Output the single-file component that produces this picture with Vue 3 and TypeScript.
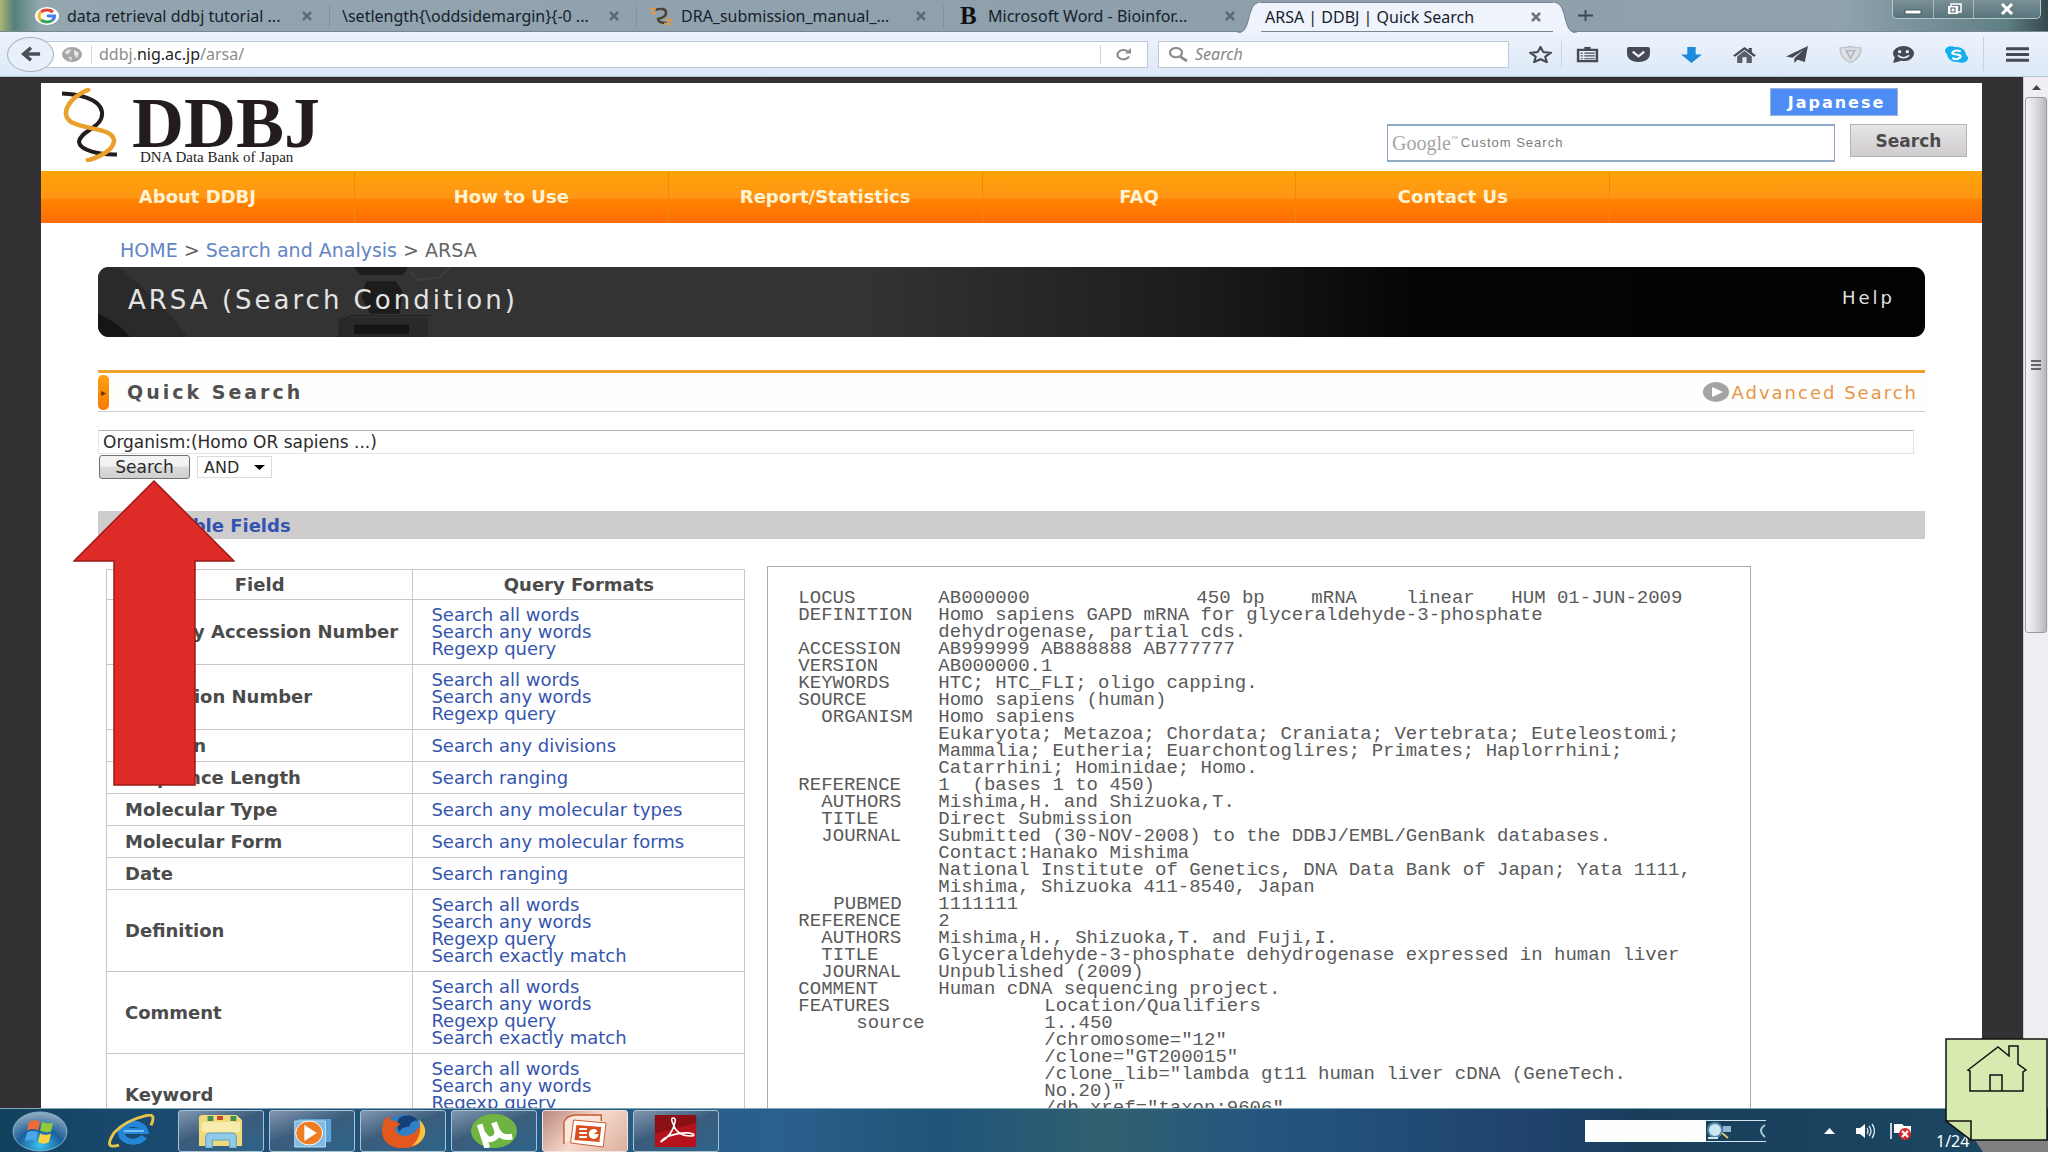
<script setup lang="ts">
import { ref } from 'vue'

interface Tab { title: string; icon: 'multi' | 'plain' | 'dna' | 'bold' }
interface FieldRow { name: string; formats: string[] }
interface RecordLine { label?: string; indent?: number; text: string; feature?: boolean; parts?: string[] }

const tabs: Tab[] = [
  { title: 'data retrieval ddbj tutorial ...', icon: 'multi' },
  { title: '\\setlength{\\oddsidemargin}{-0 ...', icon: 'plain' },
  { title: 'DRA_submission_manual_...', icon: 'dna' },
  { title: 'Microsoft Word - Bioinfor...', icon: 'bold' },
]

const navItems = ['About DDBJ', 'How to Use', 'Report/Statistics', 'FAQ', 'Contact Us']

const all = 'Search all words'
const any = 'Search any words'
const regexp = 'Regexp query'
const exact = 'Search exactly match'

const fields: FieldRow[] = [
  { name: 'Primary Accession Number', formats: [all, any, regexp] },
  { name: 'Accession Number', formats: [all, any, regexp] },
  { name: 'Division', formats: ['Search any divisions'] },
  { name: 'Sequence Length', formats: ['Search ranging'] },
  { name: 'Molecular Type', formats: ['Search any molecular types'] },
  { name: 'Molecular Form', formats: ['Search any molecular forms'] },
  { name: 'Date', formats: ['Search ranging'] },
  { name: 'Definition', formats: [all, any, regexp, exact] },
  { name: 'Comment', formats: [all, any, regexp, exact] },
  { name: 'Keyword', formats: [all, any, regexp, exact] },
]

const record: RecordLine[] = [
  { label: 'LOCUS', text: '', parts: ['AB000000', '450 bp', 'mRNA', 'linear', 'HUM 01-JUN-2009'] },
  { label: 'DEFINITION', text: 'Homo sapiens GAPD mRNA for glyceraldehyde-3-phosphate' },
  { text: 'dehydrogenase, partial cds.' },
  { label: 'ACCESSION', text: 'AB999999 AB888888 AB777777' },
  { label: 'VERSION', text: 'AB000000.1' },
  { label: 'KEYWORDS', text: 'HTC; HTC_FLI; oligo capping.' },
  { label: 'SOURCE', text: 'Homo sapiens (human)' },
  { label: 'ORGANISM', indent: 2, text: 'Homo sapiens' },
  { text: 'Eukaryota; Metazoa; Chordata; Craniata; Vertebrata; Euteleostomi;' },
  { text: 'Mammalia; Eutheria; Euarchontoglires; Primates; Haplorrhini;' },
  { text: 'Catarrhini; Hominidae; Homo.' },
  { label: 'REFERENCE', text: '1  (bases 1 to 450)' },
  { label: 'AUTHORS', indent: 2, text: 'Mishima,H. and Shizuoka,T.' },
  { label: 'TITLE', indent: 2, text: 'Direct Submission' },
  { label: 'JOURNAL', indent: 2, text: 'Submitted (30-NOV-2008) to the DDBJ/EMBL/GenBank databases.' },
  { text: 'Contact:Hanako Mishima' },
  { text: 'National Institute of Genetics, DNA Data Bank of Japan; Yata 1111,' },
  { text: 'Mishima, Shizuoka 411-8540, Japan' },
  { label: 'PUBMED', indent: 3, text: '1111111' },
  { label: 'REFERENCE', text: '2' },
  { label: 'AUTHORS', indent: 2, text: 'Mishima,H., Shizuoka,T. and Fuji,I.' },
  { label: 'TITLE', indent: 2, text: 'Glyceraldehyde-3-phosphate dehydrogenase expressed in human liver' },
  { label: 'JOURNAL', indent: 2, text: 'Unpublished (2009)' },
  { label: 'COMMENT', text: 'Human cDNA sequencing project.' },
  { label: 'FEATURES', text: 'Location/Qualifiers', feature: true },
  { label: 'source', indent: 5, text: '1..450', feature: true },
  { text: '/chromosome="12"', feature: true },
  { text: '/clone="GT200015"', feature: true },
  { text: '/clone_lib="lambda gt11 human liver cDNA (GeneTech.', feature: true },
  { text: 'No.20)"', feature: true },
  { text: '/db_xref="taxon:9606"', feature: true },
]

const query = ref('Organism:(Homo OR sapiens ...)')
const operator = ref('AND')
</script>

<template>
  <div class="desktop">
    <header class="tabstrip">
      <div v-for="tab in tabs" :key="tab.title" class="tab" :class="'tab-' + tab.icon">
        <svg v-if="tab.icon === 'multi'" class="fav" viewBox="0 0 24 18" preserveAspectRatio="none">
          <ellipse cx="12" cy="9" rx="12" ry="9" fill="#fff" />
          <g fill="none" stroke-width="3">
            <path d="M18 5A8 6 0 0 0 6 5" stroke="#e2453a" />
            <path d="M6 5A8 6 0 0 0 6 13" stroke="#f4b928" />
            <path d="M6 13A8 6 0 0 0 17 13.500" stroke="#35a155" />
            <path d="M12 9H19.500A8 6 0 0 1 17 13.500" stroke="#4380ea" />
          </g>
        </svg>
        <svg v-else-if="tab.icon === 'dna'" class="fav" viewBox="0 0 24 18" preserveAspectRatio="none">
          <path d="M6 3q10-3 11 2T9 12q0 4 9 4" fill="none" stroke="#4b4338" stroke-width="2.500" />
          <path d="M1 2h6M2 6h5M16 13h7M15 17h7" stroke="#d79a4b" stroke-width="2.500" />
        </svg>
        <span v-else-if="tab.icon === 'bold'" class="fav letter">B</span>
        <span class="tab-title">{{ tab.title }}</span>
        <button class="tab-close" aria-label="Close tab">
          <svg viewBox="0 0 12 10"><path d="M2 1l8 8M10 1l-8 8" stroke="#5d6b78" stroke-width="2.500" /></svg>
        </button>
      </div>
      <div class="tab active">
        <svg class="curve left" viewBox="0 0 24 30" preserveAspectRatio="none"><path d="M0 30C16 30 8 0 24 0V30z" fill="#eef3fc" /><path d="M0 30C16 30 8 0 24 0" fill="none" stroke="#74838f" /></svg>
        <span class="tab-title">ARSA | DDBJ | Quick Search</span>
        <button class="tab-close" aria-label="Close tab">
          <svg viewBox="0 0 12 10"><path d="M2 1l8 8M10 1l-8 8" stroke="#6c7179" stroke-width="2.500" /></svg>
        </button>
        <svg class="curve right" viewBox="0 0 24 30" preserveAspectRatio="none"><path d="M24 30C8 30 16 0 0 0V30z" fill="#eef3fc" /><path d="M24 30C8 30 16 0 0 0" fill="none" stroke="#74838f" /></svg>
      </div>
      <button class="new-tab" aria-label="New tab">
        <svg viewBox="0 0 16 12" preserveAspectRatio="none"><path d="M8 0v12M0 6h16" stroke="#3d4a55" stroke-width="2" /></svg>
      </button>
      <div class="window-buttons">
        <button aria-label="Minimize"><svg viewBox="0 0 18 12"><rect x="1" y="7" width="16" height="4" fill="#fff" stroke="#46585e" /></svg></button>
        <button aria-label="Restore"><svg viewBox="0 0 18 12"><rect x="6" y="1" width="10" height="8" fill="none" stroke="#fff" stroke-width="1.500" /><rect x="3" y="3" width="10" height="8" fill="#fff" /><rect x="6" y="5" width="4" height="4" fill="none" stroke="#46585e" /></svg></button>
        <button aria-label="Close"><svg viewBox="0 0 18 12"><path d="M4 1l10 10M14 1L4 11" stroke="#fff" stroke-width="3" /></svg></button>
      </div>
    </header>

    <div class="toolbar">
      <button class="back" aria-label="Back">
        <svg viewBox="0 0 22 18" preserveAspectRatio="none"><path d="M11 2L3 9l8 7M3 9h18" fill="none" stroke="#4a4f57" stroke-width="4" /></svg>
      </button>
      <div class="urlbar">
        <svg class="globe" viewBox="0 0 20 16" preserveAspectRatio="none"><ellipse cx="10" cy="8" rx="10" ry="8" fill="#a6a6a6" /><path d="M3 5q4-4 6-2l-2 4-3 1zM12 3l5 3-2 6-3-4zM6 10l4 1-1 4z" fill="#e4e4e4" /></svg>
        <div class="address"><span>ddbj.</span><b>nig.ac.jp</b><span>/arsa/</span></div>
        <button class="reload" aria-label="Reload">
          <svg viewBox="0 0 18 14" preserveAspectRatio="none"><path d="M14 9A6 5 0 1 1 13 4" fill="none" stroke="#8b8b8b" stroke-width="2.200" /><path d="M10 6h6V0z" fill="#8b8b8b" /></svg>
        </button>
      </div>
      <label class="searchbar">
        <svg viewBox="0 0 20 16" preserveAspectRatio="none"><ellipse cx="8" cy="6" rx="6" ry="5" fill="none" stroke="#8d8d8d" stroke-width="2.200" /><path d="M12 10l7 5" stroke="#8d8d8d" stroke-width="3" /></svg>
        <input type="text" placeholder="Search" aria-label="Search the web" />
      </label>
      <div class="tools">
        <button class="star" aria-label="Bookmark"><svg viewBox="0 0 24 18" preserveAspectRatio="none"><path d="M12 1l3 5.500 7.500.8-5.500 4 1.500 5.700L12 14l-6.500 3L7 11.300l-5.500-4L9 6.500z" fill="none" stroke="#454a55" stroke-width="2.200" /></svg></button>
        <button class="list" aria-label="Bookmarks list"><svg viewBox="0 0 22 18" preserveAspectRatio="none"><path d="M2 4h18v12H2z" fill="none" stroke="#454a55" stroke-width="2.400" /><path d="M8 1h6v3H8z" fill="#454a55" /><path d="M4.500 7.500h2M8 7.500h10M4.500 10.500h2M8 10.500h10M4.500 13.500h2M8 13.500h10" stroke="#454a55" stroke-width="1.300" /></svg></button>
        <button aria-label="Pocket"><svg viewBox="0 0 24 18" preserveAspectRatio="none"><path d="M2 1h20q2 0 2 2v4q0 10-12 10T0 7V3q0-2 2-2z" fill="#454a55" /><path d="M6 6l6 5 6-5" fill="none" stroke="#e8eff9" stroke-width="2.400" /></svg></button>
        <button aria-label="Downloads"><svg viewBox="0 0 22 18" preserveAspectRatio="none"><path d="M7 1h8v8h6L11 18 1 9h6z" fill="#1c8bd9" /></svg></button>
        <button aria-label="Home page"><svg viewBox="0 0 22 18" preserveAspectRatio="none"><path d="M11 1L0 10l2 1.500 9-7.500 9 7.500 2-1.500-4-3.300V2h-3v2.200z" fill="#454a55" /><path d="M4 11l7-6 7 6v7h-5v-6H9v6H4z" fill="#5a5f69" /></svg></button>
        <button aria-label="Send"><svg viewBox="0 0 22 18" preserveAspectRatio="none"><path d="M21 0L0 11l6 1.500L17 4 8 13v5l3-3.500 7 2.500z" fill="#454a55" /></svg></button>
        <button aria-label="Shield"><svg viewBox="0 0 22 18" preserveAspectRatio="none"><path d="M1 2q5 0 10-1.500Q16 2 21 2q0 11-10 15.500Q1 13 1 2z" fill="#dde1e6" stroke="#bfc3c9" stroke-width="1.500" /><path d="M7 5h8l-4 8z" fill="none" stroke="#b4b8be" stroke-width="1.800" /></svg></button>
        <button aria-label="Chat"><svg viewBox="0 0 24 18" preserveAspectRatio="none"><ellipse cx="12" cy="8" rx="11" ry="8" fill="#454a55" /><path d="M3 12l-2 6 8-2z" fill="#454a55" /><circle cx="8" cy="6" r="1.800" fill="#e8eff9" /><circle cx="16" cy="6" r="1.800" fill="#e8eff9" /><path d="M6 10q6 5 12 0" fill="none" stroke="#e8eff9" stroke-width="1.600" /></svg></button>
        <button aria-label="Skype"><svg viewBox="0 0 22 18" preserveAspectRatio="none"><ellipse cx="11" cy="9" rx="9" ry="8" fill="#14aef0" /><ellipse cx="6" cy="5" rx="6" ry="4.800" fill="#14aef0" /><ellipse cx="16" cy="13" rx="6" ry="4.800" fill="#14aef0" /><path d="M15 6q-4-2.500-7 0t3 3 3 3.500-7 0" fill="none" stroke="#fff" stroke-width="2.200" /></svg></button>
        <button class="menu" aria-label="Menu"><svg viewBox="0 0 24 18" preserveAspectRatio="none"><path d="M1 3h22M1 9h22M1 15h22" stroke="#454a55" stroke-width="3.200" stroke-linecap="round" /></svg></button>
      </div>
    </div>

    <div class="viewport">
      <main class="page">
        <div class="masthead">
          <a href="#" class="logo">
            <svg viewBox="0 0 56 74" preserveAspectRatio="none">
              <path d="M0 5.500C14 6 38 10 40 24 42 40 18 42 17 54 18 62 36 67 55 66.500" fill="none" stroke="#231c1c" stroke-width="4" />
              <path d="M28 1C10 8-4 24 9 34 24 42 52 40 52 53 51 64 34 70 24 73" fill="none" stroke="#e9a02d" stroke-width="4.500" />
            </svg>
            <span class="logo-text"><strong>DDBJ</strong><small>DNA Data Bank of Japan</small></span>
          </a>
          <div class="site-tools">
            <a href="#" class="language">Japanese</a>
            <form class="site-search" @submit.prevent>
              <label class="google-box">
                <span class="google">Google<sup>™</sup></span><span class="custom">Custom Search</span>
                <input type="text" aria-label="Google Custom Search" />
              </label>
              <button>Search</button>
            </form>
          </div>
        </div>

        <nav class="mainnav">
          <a v-for="item in navItems" :key="item" href="#">{{ item }}</a>
        </nav>

        <div class="content">
          <p class="crumbs"><a href="#">HOME</a> &gt; <a href="#">Search and Analysis</a> &gt; ARSA</p>
          <div class="banner">
            <svg class="banner-art" viewBox="0 0 500 69" preserveAspectRatio="none">
              <path d="M0 0h20q40 30 70 69H30Q10 50 0 46z" fill="#2a2a2a" />
              <path d="M0 46q20 8 32 23H0z" fill="#151515" />
              <path d="M255 0h55l-5 8h-42zM268 14h30l6 10-2 22h-30l-8-16z" fill="#1c1c1c" />
              <path d="M240 50h90v19h-90z" fill="#292929" /><path d="M256 57h55v9h-55z" fill="#151515" />
              <path d="M312 4l8 9 22-3 10-10" fill="none" stroke="#3e3e3e" stroke-width="2" />
              <path d="M243 69V54l10-6h80" fill="none" stroke="#202020" />
            </svg>
            <h1>ARSA (Search Condition)</h1>
            <a href="#">Help</a>
          </div>

          <div class="section-head">
            <i class="marker">▸</i>
            <h2>Quick Search</h2>
            <a href="#"><svg viewBox="0 0 26 20" preserveAspectRatio="none"><ellipse cx="13" cy="10" rx="13" ry="10" fill="#a4a4a4" /><path d="M9 5l11 5-11 5z" fill="#fff" /></svg>Advanced Search</a>
          </div>

          <form class="query" @submit.prevent>
            <input v-model="query" type="text" aria-label="Search condition" />
            <div class="query-actions">
              <button>Search</button>
              <span class="operator">
                <select v-model="operator" aria-label="Operator"><option>AND</option><option>OR</option></select>
                <svg viewBox="0 0 12 6" preserveAspectRatio="none"><path d="M0 0h12L6 6z" /></svg>
              </span>
            </div>
          </form>

          <h3 class="fields-title"><a href="#">Available Fields</a></h3>

          <div class="columns">
            <table class="fields">
              <thead><tr><th scope="col">Field</th><th scope="col">Query Formats</th></tr></thead>
              <tbody>
                <tr v-for="row in fields" :key="row.name">
                  <th scope="row">{{ row.name }}</th>
                  <td><a v-for="f in row.formats" :key="f" href="#">{{ f }}</a></td>
                </tr>
              </tbody>
            </table>
            <section class="record">
              <div v-for="(line, i) in record" :key="i" class="line" :class="{ feature: line.feature }">
                <span class="label" :class="'in' + (line.indent ?? 0)">{{ line.label }}</span>
                <span v-if="line.parts" class="locus"><span v-for="p in line.parts" :key="p">{{ p }}</span></span>
                <span v-else>{{ line.text }}</span>
              </div>
            </section>
          </div>
        </div>
      </main>
      <div class="scrollbar">
        <svg class="up" viewBox="0 0 10 5" preserveAspectRatio="none"><path d="M0 5l5-5 5 5z" fill="#444" /></svg>
        <div class="thumb"><i></i><i></i><i></i></div>
      </div>
    </div>

    <footer class="taskbar">
      <button class="orb" aria-label="Start">
        <svg viewBox="0 0 56 42" preserveAspectRatio="none">
          <defs><radialGradient id="orb" cx=".5" cy=".85" r=".8"><stop offset="0" stop-color="#39c4f2" /><stop offset=".5" stop-color="#1b5f9c" /><stop offset="1" stop-color="#8aa7bb" /></radialGradient></defs>
          <ellipse cx="28" cy="21" rx="27" ry="20" fill="url(#orb)" stroke="#7fb2cf" />
          <path d="M17 11q6-3 11 0l-2 9q-5-3-11 0z" fill="#ec6b36" /><path d="M30 11q6 3 11 1l-2 9q-5 2-11-1z" fill="#92c83e" />
          <path d="M15 22q6-3 11 0l-2 9q-5-3-11 0z" fill="#4aa8e8" /><path d="M28 23q6 3 11 0l-2 9q-5 3-11 0z" fill="#fbd043" />
        </svg>
      </button>
      <button class="ie" aria-label="Internet Explorer">
        <svg viewBox="0 0 48 36" preserveAspectRatio="none">
          <path d="M37 24A12 9.500 0 1 1 38 18H17" fill="none" stroke="#2386d8" stroke-width="6.500" />
          <path d="M17 18h20" stroke="#7cc6f5" stroke-width="2" />
          <path d="M44 12Q50-2 38 2 18 7 7 20-4 38 12 33" fill="none" stroke="#e8c54a" stroke-width="3" />
        </svg>
      </button>
      <button class="task" aria-label="Explorer">
        <svg viewBox="0 0 48 34" preserveAspectRatio="none"><path d="M1 4q0-3 4-3h35l6 5v26H1z" fill="#f0d97c" /><path d="M4 8h40v10H4z" fill="#f8ebae" /><path d="M10 2h6v5h-6zM34 2h6v5h-6z" fill="#3f8f52" /><path d="M20 2h6v4h-6z" fill="#c8442b" /><path d="M8 34V23q0-4 5-4h22q5 0 5 4v11h-7v-8H15v8z" fill="#8fcbe9" stroke="#5f9fc4" /></svg>
      </button>
      <button class="task" aria-label="Media Player">
        <svg viewBox="0 0 48 34" preserveAspectRatio="none"><path d="M10 5h34v23H10z" fill="#5ca2d4" /><path d="M6 7h32v26H6z" fill="#7dbbe6" stroke="#bfe0f5" /><ellipse cx="21" cy="19" rx="14" ry="12" fill="#ee7d25" stroke="#fff" /><path d="M16 11l13 8-13 8z" fill="#fff" /></svg>
      </button>
      <button class="task" aria-label="Firefox">
        <svg viewBox="0 0 48 36" preserveAspectRatio="none"><ellipse cx="26" cy="16" rx="19" ry="15" fill="#2f7fc4" /><path d="M20 4q12-6 20 3-9 0-9 6-9 1-11 6-4-8 0-15z" fill="#143f78" /><path d="M3 10q2-6 6-8l2 5q6-1 10 4l-6 4q3 9 13 8 8-1 12-9 6 0 5 8-2 14-21 14T2 20q0-5 1-10z" fill="#e3581f" /><path d="M41 6q9 8 5 18-4 8-13 10 12-10 8-28z" fill="#f7c33a" /></svg>
      </button>
      <button class="task" aria-label="uTorrent">
        <svg viewBox="0 0 48 36" preserveAspectRatio="none"><ellipse cx="24" cy="18" rx="24" ry="18" fill="#6fb443" /><path d="M9 11l8 25M13 21q4 8 10 5t4-9L24 9M28 18q3 8 15 6" fill="none" stroke="#fff" stroke-width="6" /></svg>
      </button>
      <button class="task current" aria-label="PowerPoint">
        <svg viewBox="0 0 48 34" preserveAspectRatio="none"><path d="M2 30V8q3-7 13-7h26v6" fill="#fbe6da" stroke="#c75b34" stroke-width="1.500" /><path d="M12 6l34 3-3 24-34-4z" fill="#fff" stroke="#c75b34" /><path d="M15 11l26 2-2 15-26-2z" fill="#d9501f" /><path d="M18 15h8M18 19h8M18 23h8" stroke="#fff" stroke-width="2" /><ellipse cx="33" cy="20" rx="5" ry="5" fill="#fff" /><path d="M33 20h6v-4z" fill="#d9501f" /></svg>
      </button>
      <button class="task" aria-label="Adobe Reader">
        <svg viewBox="0 0 48 34" preserveAspectRatio="none"><path d="M2 1h43v32H2z" fill="#b5121b" /><path d="M2 1h43v8L2 20z" fill="#8a1015" /><path d="M8 28Q20 22 23 8q1-4-2-4t0 6q4 12 18 12 5 0 3-2-9-3-25 2-6 2-9 6z" fill="none" stroke="#fff" stroke-width="1.600" /></svg>
      </button>
      <div class="tray">
        <input class="deskband" type="text" aria-label="Address" />
        <div class="deskband-icons">
          <svg viewBox="0 0 60 20" preserveAspectRatio="none"><circle cx="9" cy="9" r="7" fill="#cfe6f3" stroke="#4f87a8" stroke-width="2" /><path d="M2 17h10" stroke="#d7e7ef" stroke-width="2" /><path d="M16 12l6 5" stroke="#d9c65a" stroke-width="2" /><path d="M17 5h8v6h-8z" fill="#8fb8cf" /><path d="M59 4q-8 5 0 12" fill="none" stroke="#a9cadb" stroke-width="2" /></svg>
        </div>
        <svg class="chevron" viewBox="0 0 12 6" preserveAspectRatio="none"><path d="M0 6l6-6 6 6z" fill="#fff" /></svg>
        <svg class="speaker" viewBox="0 0 20 16" preserveAspectRatio="none"><path d="M1 5h4l5-4v14l-5-4H1z" fill="#fff" /><path d="M12 5q2 3 0 6M14 3q4 5 0 10M17 1q5 7 0 14" fill="none" stroke="#dfe9ef" stroke-width="1.300" /></svg>
        <svg class="flag" viewBox="0 0 22 17" preserveAspectRatio="none"><path d="M1 0v16" stroke="#fff" stroke-width="1.500" /><path d="M4 1h8l2 2h7v7H4z" fill="#fff" /><circle cx="15" cy="11" r="6" fill="#d6282c" /><path d="M12 8l6 6M18 8l-6 6" stroke="#fff" stroke-width="2" /></svg>
        <span class="date">1/24</span>
      </div>
    </footer>

    <svg class="pointer" viewBox="0 0 162 306"><path d="M81 1L161 81H122V305H41V81H1z" fill="#df2b28" stroke="#9c1a16" stroke-width="1.500" /></svg>
    <svg class="note" viewBox="0 0 103 114">
      <path d="M30 102h73v12H38z" fill="#808080" />
      <path d="M1 1h101v101H26L1 83z" fill="#d7eab0" stroke="#111" stroke-width="1.500" />
      <path d="M1 83h25v19z" fill="#cfe3a4" stroke="#111" stroke-width="1.500" />
      <path d="M25 53V33l-2-1 30-23 11 9V8h9v18l8 6-3 2v19zM45 53V37h12v16" fill="none" stroke="#111" stroke-width="1.500" />
    </svg>
  </div>
</template>

<style>
body { margin: 0; overflow: hidden; }
</style>

<style scoped>
* { box-sizing: border-box; }
button { border: 0; background: none; padding: 0; font: inherit; color: inherit; display: flex; align-items: center; justify-content: center; }
a { text-decoration: none; color: #3555ad; }
h1, h2, h3, p { margin: 0; }
.desktop { position: relative; height: 100vh; display: flex; flex-direction: column; overflow: hidden; font-family: "DejaVu Sans", Verdana, sans-serif; font-size: 18px; color: #4b4b4b; background: #343134; }

.tabstrip { flex: none; height: 32px; display: flex; background: linear-gradient(90deg, #a9b86f 0, #56807c 14px, #93a8ad 40px, #93a5b1 80px, #8c9fab 66%, #8fa2ae 90%, #5f7f84 98%, #33494c); font: 16px/30px "Noto Sans", "Open Sans", sans-serif; color: #17212b; border-bottom: 1px solid #77868f; }
.tab { display: flex; align-items: center; width: 307px; padding: 0 15px 0 13px; }
.tab + .tab { background: linear-gradient(#7f919d, #7f919d) left 6px / 1px 22px no-repeat; }
.tab-multi { width: 329px; padding-left: 35px; }
.tab-bold { width: 294px; padding-left: 17px; padding-right: 0; }
.fav { flex: none; width: 24px; height: 18px; margin-right: 8px; }
.letter { font: bold 25px/18px "Liberation Serif", serif; width: 20px; color: #111; }
.tab-title { flex: 1; white-space: nowrap; }
.tab-close { width: 14px; }
.tab-close svg { width: 12px; height: 10px; }
.tab.active { position: relative; width: 292px; margin: 2px 24px 0; padding: 0 10px 0 4px; background: #eef3fc; border-top: 1px solid #74838f; }
.tab.active .tab-title { line-height: 26px; }
.curve { position: absolute; top: -1px; width: 24px; height: 31px; }
.curve.left { right: 100%; }
.curve.right { left: 100%; }
.new-tab { width: 16px; }
.new-tab svg { width: 15px; height: 11px; }
.window-buttons { display: flex; align-self: flex-start; margin-left: auto; margin-right: 7px; height: 19px; border: 1px solid #b6c8cc; border-top: 0; border-radius: 0 0 5px 5px; background: linear-gradient(#7a9096, #56757b); }
.window-buttons button { width: 40px; }
.window-buttons button + button { border-left: 1px solid #a6babf; }
.window-buttons button:last-child { width: 67px; }
.window-buttons svg { width: 18px; height: 12px; }

.toolbar { flex: none; height: 45px; display: flex; align-items: center; padding: 0 19px 0 7px; background: linear-gradient(#eef3fc, #dce9f8); border-bottom: 1px solid #b7c4d4; font: 16px/26px "Noto Sans", "Open Sans", sans-serif; }
.back { position: relative; z-index: 1; width: 47px; height: 35px; border: 1px solid #a9b2bf; border-radius: 50%; background: #e8f0fa; flex: none; }
.back svg { width: 20px; height: 16px; }
.urlbar { flex: 1; display: flex; align-items: center; height: 27px; margin-left: -10px; padding-left: 17px; background: #fff; border: 1px solid #bcc8d6; }
.globe { width: 20px; height: 15px; }
.address { flex: 1; margin-left: 9px; padding-left: 7px; border-left: 1px solid #d6d6d6; line-height: 19px; color: #8c8c8c; }
.address b { font-weight: 400; color: #222; }
.reload { width: 47px; height: 19px; border-left: 1px solid #ccd3dc; }
.reload svg { width: 18px; height: 13px; }
.searchbar { flex: none; width: 351px; display: flex; align-items: center; height: 27px; margin-left: 10px; padding-left: 9px; background: #fff; border: 1px solid #bcc8d6; }
.searchbar svg { width: 20px; height: 15px; }
.searchbar input { flex: 1; min-width: 0; border: 0; padding: 0 7px; background: none; font: inherit; font-style: italic; }
.searchbar input::placeholder { color: #868686; }
.tools { flex: none; display: flex; align-items: center; padding-left: 10px; }
.tools button { width: 53px; height: 26px; }
.tools button svg { width: 23px; height: 17px; }
.tools .star { width: 43px; border-right: 1px solid #c9d2de; }
.tools .list { width: 50px; }
.tools .menu { width: 46px; height: 34px; padding-left: 21px; border-left: 1px solid #c9d2de; }

.viewport { flex: 1; min-height: 0; display: flex; overflow: hidden; }
.page { flex: 1; min-width: 0; margin: 6px 41px 0; background: #fff; overflow: hidden; }
.masthead { display: flex; justify-content: space-between; height: 88px; padding: 5px 15px 0 21px; }
.logo { display: flex; }
.logo svg { width: 56px; height: 74px; }
.logo-text { display: flex; flex-direction: column; padding-left: 14px; color: #231c1c; font-family: "Liberation Serif", serif; }
.logo-text strong { padding-top: 6px; font-size: 72px; line-height: 58px; font-weight: 700; }
.logo-text small { margin-top: -3px; padding-left: 8px; font-size: 15px; line-height: 16px; }
.site-tools { display: flex; flex-direction: column; align-items: flex-end; }
.language { width: 128px; height: 28px; margin-right: 69px; padding-left: 5px; background: #4d8df5; border: 1px solid #9bb2d8; color: #fff; font-weight: 700; font-size: 16px; line-height: 28px; letter-spacing: 2px; text-align: center; }
.site-search { display: flex; gap: 15px; margin-top: 8px; }
.google-box { display: flex; align-items: center; width: 448px; height: 38px; padding-left: 4px; border: 1px solid #8fa8c4; border-width: 2px 1px; }
.google { font: 20px/30px "Liberation Serif", serif; color: #a5a5a5; }
.google sup { font-size: 7px; vertical-align: 9px; line-height: 0; }
.custom { font: 13px/30px "Liberation Sans", sans-serif; letter-spacing: 1px; color: #7c7c7c; margin-left: 3px; white-space: nowrap; }
.google-box input { flex: 1; min-width: 0; border: 0; background: none; }
.site-search button { width: 117px; height: 33px; border: 1px solid #b6b3b6; background: linear-gradient(#e6e4e6, #d0ccd0); font-weight: 700; font-size: 17px; }

.mainnav { display: flex; height: 52px; background: linear-gradient(#ffa305 0, #ff9616 52%, #ff8400 54%, #fd6c05); }
.mainnav a { width: 16.17%; border-right: 1px solid #ed8a0a; color: #fff3d4; font-weight: 700; line-height: 52px; text-align: center; }

.content { padding: 0 57px; }
.crumbs { padding: 21px 0 11px 22px; font-size: 19px; line-height: 12px; color: #666; }
.crumbs a { color: #6485c4; }
.banner { position: relative; display: flex; justify-content: space-between; height: 70px; padding: 0 30px; border-radius: 11px; background: linear-gradient(90deg, #333 0, #333 42%, #1c1c1c 60%, #050505 72%, #020202); overflow: hidden; }
.banner-art { position: absolute; left: 0; top: 0; width: 500px; height: 100%; }
.banner h1 { position: relative; font-size: 26px; line-height: 66px; font-weight: 400; letter-spacing: 3px; color: #e4e4e4; }
.banner a { position: relative; line-height: 62px; letter-spacing: 3px; color: #e0e0e0; }
.section-head { display: flex; align-items: center; height: 42px; margin-top: 33px; border-top: 3px solid #f0a02c; border-bottom: 1px solid #cfcfcf; background: #fefefc; }
.marker { width: 11px; height: 35px; border-radius: 5px; background: linear-gradient(#ffa010, #f87a04); font: 10px/35px "DejaVu Sans", sans-serif; text-align: center; color: #6b3200; }
.section-head h2 { flex: 1; margin-left: 18px; font-size: 19px; letter-spacing: 3px; color: #505050; }
.section-head a { display: flex; align-items: center; gap: 3px; padding-right: 7px; letter-spacing: 2px; color: #e8954a; }
.section-head svg { width: 26px; height: 20px; }
.query { margin-top: 18px; }
.query > input { display: block; width: calc(100% - 11px); height: 24px; padding: 0 4px; border: 1px solid #e6e2e6; border-top: 1px solid #b8b5b8; font: 17px "DejaVu Sans", sans-serif; color: #2b2b2b; }
.query-actions { display: flex; gap: 7px; margin: 1px 0 0 1px; font-size: 17px; color: #2b2b2b; }
.query-actions button { width: 91px; height: 24px; border: 1px solid #707070; border-radius: 3px; background: linear-gradient(#f3f3f3 45%, #dbdbdb 50%, #d0d0d0); }
.operator { position: relative; width: 75px; height: 22px; margin-top: 1px; }
.operator select { appearance: none; width: 100%; height: 100%; padding: 0 6px; border: 1px solid #dcdadc; background: #fff; font: 16px "DejaVu Sans", sans-serif; color: #2b2b2b; }
.operator svg { position: absolute; right: 7px; top: 9px; width: 11px; height: 5px; pointer-events: none; }
.fields-title { margin-top: 32px; height: 28px; padding-left: 33px; background: #cfccce; font-size: 18px; line-height: 30px; }
.fields-title a { color: #3453b0; }
.columns { display: grid; grid-template-columns: 13fr 20fr; gap: 22px; margin-top: 27px; padding: 0 174px 0 8px; align-items: start; }
.fields { margin-top: 3px; width: 100%; border-collapse: collapse; table-layout: fixed; line-height: 17px; }
.fields th, .fields td { border: 1px solid #cbc5cb; padding: 6px 18px 7px; height: 32px; }
.fields thead th { height: 30px; padding: 6px; }
.fields thead th:first-child { width: 48%; }
.fields tbody th { padding-right: 8px; text-align: left; white-space: nowrap; }
.fields a { display: block; }
.record { height: 760px; padding: 23px 0 0 30px; border: 1px solid #aaa; font: 19px/17px "Liberation Mono", monospace; color: #5a5a5a; white-space: pre; }
.line { display: flex; height: 17px; }
.label { flex: none; width: 140px; }
.feature .label { width: 246px; }
.in2 { padding-left: 23px; }
.in3 { padding-left: 35px; }
.in5 { padding-left: 58px; }
.locus { display: grid; grid-template-columns: 258px 115px 95px 105px auto; }

.scrollbar { flex: none; width: 25px; background: #f0eef2; border-left: 1px solid #d0cdd2; display: flex; flex-direction: column; align-items: center; }
.up { flex: none; width: 9px; height: 5px; margin: 8px 0 7px; }
.thumb { width: 22px; height: 52%; display: flex; flex-direction: column; align-items: center; justify-content: center; gap: 2px; border: 1px solid #9d9a9f; border-radius: 3px; background: linear-gradient(90deg, #f4f3f5, #dddbdf 50%, #bab8bd); }
.thumb i { width: 10px; height: 2px; background: #66636a; }

.taskbar { flex: none; display: flex; gap: 5px; height: 44px; padding: 1px 0 0 12px; border-top: 1px solid #82a5b4; background: linear-gradient(90deg, #12415e 0, #1d4d74 10%, #2a608c 38%, #1f5578 46%, #31606f 54%, #235580 62%, #20446e 74%, #193e5c 80%, #1b4762); }
.orb { width: 56px; }
.orb svg { width: 56px; height: 41px; }
.ie { width: 100px; padding-left: 15px; }
.ie svg { width: 48px; height: 34px; }
.task { width: 86px; height: 42px; border: 1px solid #a7c3d2; border-radius: 3px; background: linear-gradient(160deg, #8297b0, #3b5d7c 45%, #2d6389); }
.task svg { width: 46px; height: 34px; }
.task.current { background: linear-gradient(135deg, #b8897c, #f6d9cb 50%, #dcae9c); border-color: #f5e4dd; }
.tray { flex: 1; display: flex; align-items: center; justify-content: flex-end; }
.deskband { width: 121px; height: 22px; padding: 0 6px; border: 0; background: #fdffff; }
.deskband-icons { width: 60px; height: 22px; border: 1px solid #d7e3ea; border-width: 1px 0; margin-right: 58px; }
.deskband-icons svg { display: block; width: 60px; height: 20px; }
.chevron { width: 11px; height: 6px; margin-right: 20px; }
.speaker { width: 20px; height: 16px; margin-right: 15px; }
.flag { width: 22px; height: 17px; margin-right: 24px; }
.date { width: 112px; align-self: flex-end; font: 16px/22px "Noto Sans", sans-serif; color: #fff; }

.pointer { position: absolute; left: 73px; top: 480px; width: 162px; height: 306px; }
.note { position: absolute; right: 0; bottom: 0; width: 103px; height: 114px; }
</style>
